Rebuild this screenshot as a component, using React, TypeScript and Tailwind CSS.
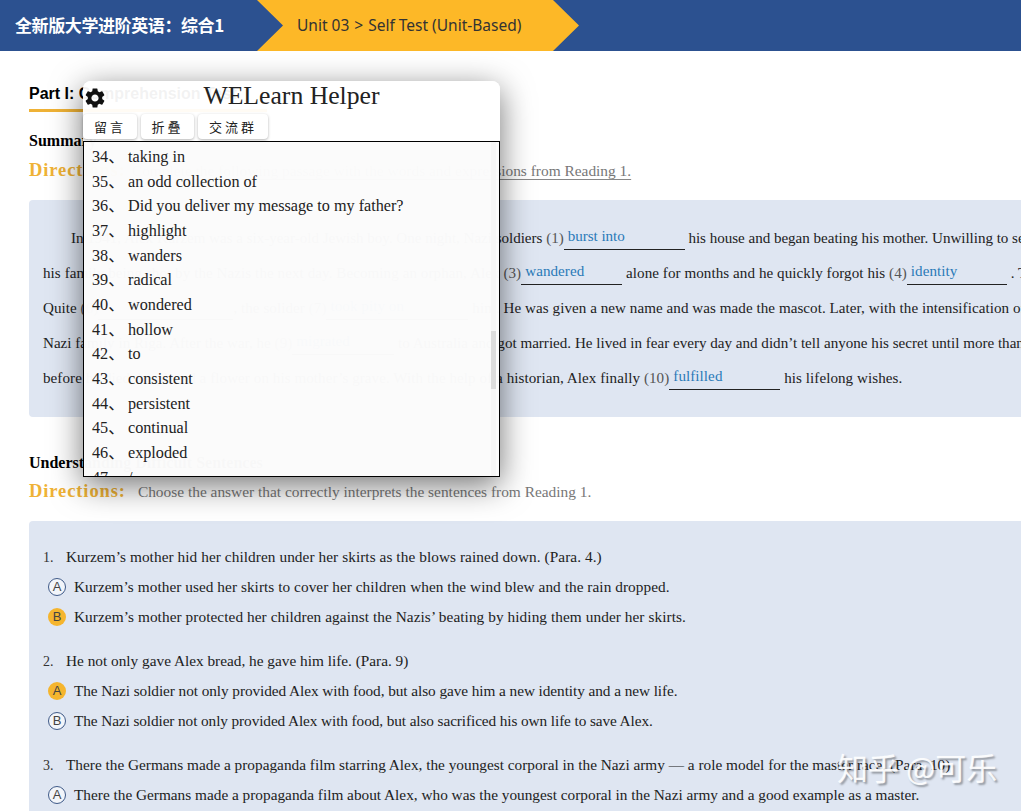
const serif = "font-['Liberation_Serif',serif]";

const helperWords: [string, string][] = [
  ['34', 'taking in'],
  ['35', 'an odd collection of'],
  ['36', 'Did you deliver my message to my father?'],
  ['37', 'highlight'],
  ['38', 'wanders'],
  ['39', 'radical'],
  ['40', 'wondered'],
  ['41', 'hollow'],
  ['42', 'to'],
  ['43', 'consistent'],
  ['44', 'persistent'],
  ['45', 'continual'],
  ['46', 'exploded'],
  ['47', '/'],
];

function Blank({ n, answer, width }: { n: string; answer: string; width: string }) {
  return (
    <>
      <span className="text-[#555]">({n})</span>
      <span className={`inline-block border-b border-[#222] leading-[18px] pb-[2px] pl-1 text-[#2a7ab8] ${width}`}>
        <span className="relative -top-[2px]">{answer || '\u00a0'}</span>
      </span>
    </>
  );
}

function Badge({ letter, picked }: { letter: string; picked?: boolean }) {
  return picked ? (
    <span className="w-[18px] h-[18px] rounded-full bg-[#f5b52e] text-[#444] text-[13px] flex items-center justify-center font-['Liberation_Sans',sans-serif] shrink-0">{letter}</span>
  ) : (
    <span className="w-[18px] h-[18px] rounded-full border-[1.5px] border-[#3f5a88] bg-white/60 text-[#444] text-[13px] flex items-center justify-center font-['Liberation_Sans',sans-serif] shrink-0">{letter}</span>
  );
}

function Option({ letter, picked, text, track = '' }: { letter: string; picked?: boolean; text: string; track?: string }) {
  return (
    <div className="flex items-center h-[30px] pl-[19px] gap-2 whitespace-nowrap">
      <Badge letter={letter} picked={picked} />
      <span className={track}>{text}</span>
    </div>
  );
}

function Question({ n, text, track = '', children }: { n: string; text: string; track?: string; children: React.ReactNode }) {
  return (
    <div className="mb-[14px]">
      <div className="flex items-center h-[30px] pl-[14px] whitespace-nowrap">
        <span className="w-[23px] text-[14px] text-[#333]">{n}.</span>
        <span className={track}>{text}</span>
      </div>
      {children}
    </div>
  );
}

function Directions({ text, gap, underlined }: { text: string; gap: string; underlined?: boolean }) {
  return (
    <div className={`flex items-baseline h-[28px] whitespace-nowrap ${gap}`}>
      <span className="text-[18.5px] tracking-[0.9px] font-bold text-[#efb236]">Directions:</span>
      <span className={`text-[15.4px] text-[#777] ${underlined ? 'underline decoration-[#888] underline-offset-[3px]' : ''}`}>{text}</span>
    </div>
  );
}

function HelperPanel() {
  return (
    <div className={`absolute left-[83px] top-[81px] w-[417px] h-[396px] flex flex-col rounded-t-lg bg-white/95 shadow-[0_8px_32px_rgba(0,0,0,0.55)] ${serif}`}>
      <div className="relative h-[33px] flex items-start justify-center text-[25.7px] leading-[30px] text-[#222]">
        <svg viewBox="0 0 24 24" className="absolute left-0 top-[5px] w-[24px] h-[24px]" fill="#111">
          <path d="M19.14 12.94c.04-.3.06-.61.06-.94 0-.32-.02-.64-.07-.94l2.03-1.58a.49.49 0 0 0 .12-.61l-1.92-3.32a.488.488 0 0 0-.59-.22l-2.39.96c-.5-.38-1.03-.7-1.62-.94l-.36-2.54a.484.484 0 0 0-.48-.41h-3.84c-.24 0-.43.17-.47.41l-.36 2.54c-.59.24-1.13.57-1.62.94l-2.39-.96c-.22-.08-.47 0-.59.22L2.74 8.87c-.12.21-.08.47.12.61l2.03 1.58c-.05.3-.09.63-.09.94s.02.64.07.94l-2.03 1.58a.49.49 0 0 0-.12.61l1.92 3.32c.12.22.37.29.59.22l2.39-.96c.5.38 1.03.7 1.62.94l.36 2.54c.05.24.24.41.48.41h3.84c.24 0 .44-.17.47-.41l.36-2.54c.59-.24 1.13-.56 1.62-.94l2.39.96c.22.08.47 0 .59-.22l1.92-3.32c.12-.22.07-.47-.12-.61l-2.01-1.58zM12 15.6c-1.98 0-3.6-1.62-3.6-3.6s1.62-3.6 3.6-3.6 3.6 1.62 3.6 3.6-1.62 3.6-3.6 3.6z" />
        </svg>
        <span>WELearn Helper</span>
      </div>
      <div className="flex gap-1 h-[27px] font-['Noto_Sans_CJK_SC',sans-serif] text-[13px] text-[#222]">
        <button className="w-[54px] h-[25px] rounded bg-white shadow-[0_1px_3px_rgba(0,0,0,0.3)] tracking-[3px]">留言</button>
        <button className="w-[53px] h-[25px] rounded bg-white shadow-[0_1px_3px_rgba(0,0,0,0.3)] tracking-[3px]">折叠</button>
        <button className="w-[70px] h-[25px] rounded bg-white shadow-[0_1px_3px_rgba(0,0,0,0.3)] tracking-[3px]">交流群</button>
      </div>
      <div className="relative flex-1 overflow-hidden border border-black bg-[#fafafa]/70 pl-[8px] pt-[3px] text-[#222] text-[16.2px]">
        {helperWords.map(([n, word]) => (
          <div key={n} className="flex items-center h-[24.65px] whitespace-nowrap">
            <span className="w-[36px] font-['Liberation_Serif','Noto_Sans_CJK_SC',serif]">{n}、</span>
            <span>{word}</span>
          </div>
        ))}
        <div className="absolute right-[3px] top-0 bottom-0 w-[5px] bg-[#f6f6f6]">
          <div className="mt-[189px] h-[58px] bg-[#dcdcdc]" />
        </div>
      </div>
    </div>
  );
}

export default function App() {
  return (
    <div className={`relative h-[811px] w-full overflow-hidden bg-white text-[15.3px] text-[#222] ${serif}`}>
      <header className="flex h-[51px] bg-[#2c5190] font-['Noto_Sans',sans-serif]">
        <div className="w-[257px] pl-[15px] pb-[2px] flex items-center text-[17px] font-bold text-white font-['Noto_Sans_CJK_SC',sans-serif] tracking-[-0.4px]">全新版大学进阶英语：综合1</div>
        <div className="w-[322px] pl-[40px] flex items-center bg-[#fdb827] text-[15.5px] text-[#333] [clip-path:polygon(0_0,296px_0,322px_50%,296px_100%,0_100%,26px_50%)]">Unit 03<span className="mx-[5px]">&gt;</span>Self Test (Unit-Based)</div>
      </header>

      <main className="pt-[31px] pl-[29px]">
        <div className="w-fit border-b-[3px] border-[#efb236] pb-1 text-[16px] font-bold text-black font-['Liberation_Sans',sans-serif] leading-[23px] pr-[30px]">Part I: Comprehension Test</div>
        <h3 className="mt-[18px] font-bold text-black leading-[22px] text-[16px]">Summary</h3>
        <Directions gap="gap-[6px] mt-[5px]" underlined text="Complete the following passage with the words and expressions from Reading 1." />

        <section className="mt-[15px] h-[217px] w-[1100px] rounded bg-[#dfe6f2] pl-[14px] pt-[21px] text-[15.1px] leading-[35px] whitespace-nowrap">
          <div className="pl-[28px] tracking-[-0.03px]">In 1941, Alex Kurzem was a six-year-old Jewish boy. One night, Nazi soldiers <Blank n="1" answer="burst into" width="w-[121px]" /> his house and began beating his mother. Unwilling to see</div>
          <div className="tracking-[0.06px]">his family being shot by the Nazis the next day. Becoming an orphan, Alex <Blank n="3" answer="wandered" width="w-[101px]" /> alone for months and he quickly forgot his <Blank n="4" answer="identity" width="w-[100px]" /> . The</div>
          <div className="tracking-[0.05px]">Quite <Blank n="6" answer="" width="w-[135px]" />, the solider <Blank n="7" answer="took pity on" width="w-[142px]" /> him. He was given a new name and was made the mascot. Later, with the intensification of</div>
          <div>Nazi family in Riga. After the war, he <Blank n="9" answer="migrated" width="w-[102px]" /> to Australia and got married. He lived in fear every day and didn’t tell anyone his secret until more than</div>
          <div className="tracking-[0.06px]">before he died, he placed a flower on his mother’s grave. With the help of a historian, Alex finally <Blank n="10" answer="fulfilled" width="w-[111px]" /> his lifelong wishes.</div>
        </section>

        <h3 className="mt-[35px] font-bold text-black leading-[22px] text-[16px]">Understanding Difficult Sentences</h3>
        <Directions gap="gap-[12px] mt-[4px]" text="Choose the answer that correctly interprets the sentences from Reading 1." />

        <section className="mt-[15px] w-[1100px] rounded bg-[#dfe6f2] pt-[21px] pb-10">
          <Question n="1" track="tracking-[0.07px]" text="Kurzem’s mother hid her children under her skirts as the blows rained down. (Para. 4.)">
            <Option letter="A" track="tracking-[0.05px]" text="Kurzem’s mother used her skirts to cover her children when the wind blew and the rain dropped." />
            <Option letter="B" picked track="tracking-[0.07px]" text="Kurzem’s mother protected her children against the Nazis’ beating by hiding them under her skirts." />
          </Question>
          <Question n="2" text="He not only gave Alex bread, he gave him life. (Para. 9)">
            <Option letter="A" picked track="tracking-[-0.07px]" text="The Nazi soldier not only provided Alex with food, but also gave him a new identity and a new life." />
            <Option letter="B" track="tracking-[-0.1px]" text="The Nazi soldier not only provided Alex with food, but also sacrificed his own life to save Alex." />
          </Question>
          <Question n="3" text="There the Germans made a propaganda film starring Alex, the youngest corporal in the Nazi army — a role model for the master race. (Para. 10)">
            <Option letter="A" text="There the Germans made a propaganda film about Alex, who was the youngest corporal in the Nazi army and a good example as a master." />
          </Question>
        </section>
      </main>

      <HelperPanel />

      <div className="absolute left-[837px] top-[745px] text-[31px] leading-[44px] text-white/90 font-['Noto_Sans_CJK_SC',sans-serif] [text-shadow:2px_2px_2px_rgba(0,0,0,0.35)] whitespace-nowrap">知乎 @可乐</div>
    </div>
  );
}
